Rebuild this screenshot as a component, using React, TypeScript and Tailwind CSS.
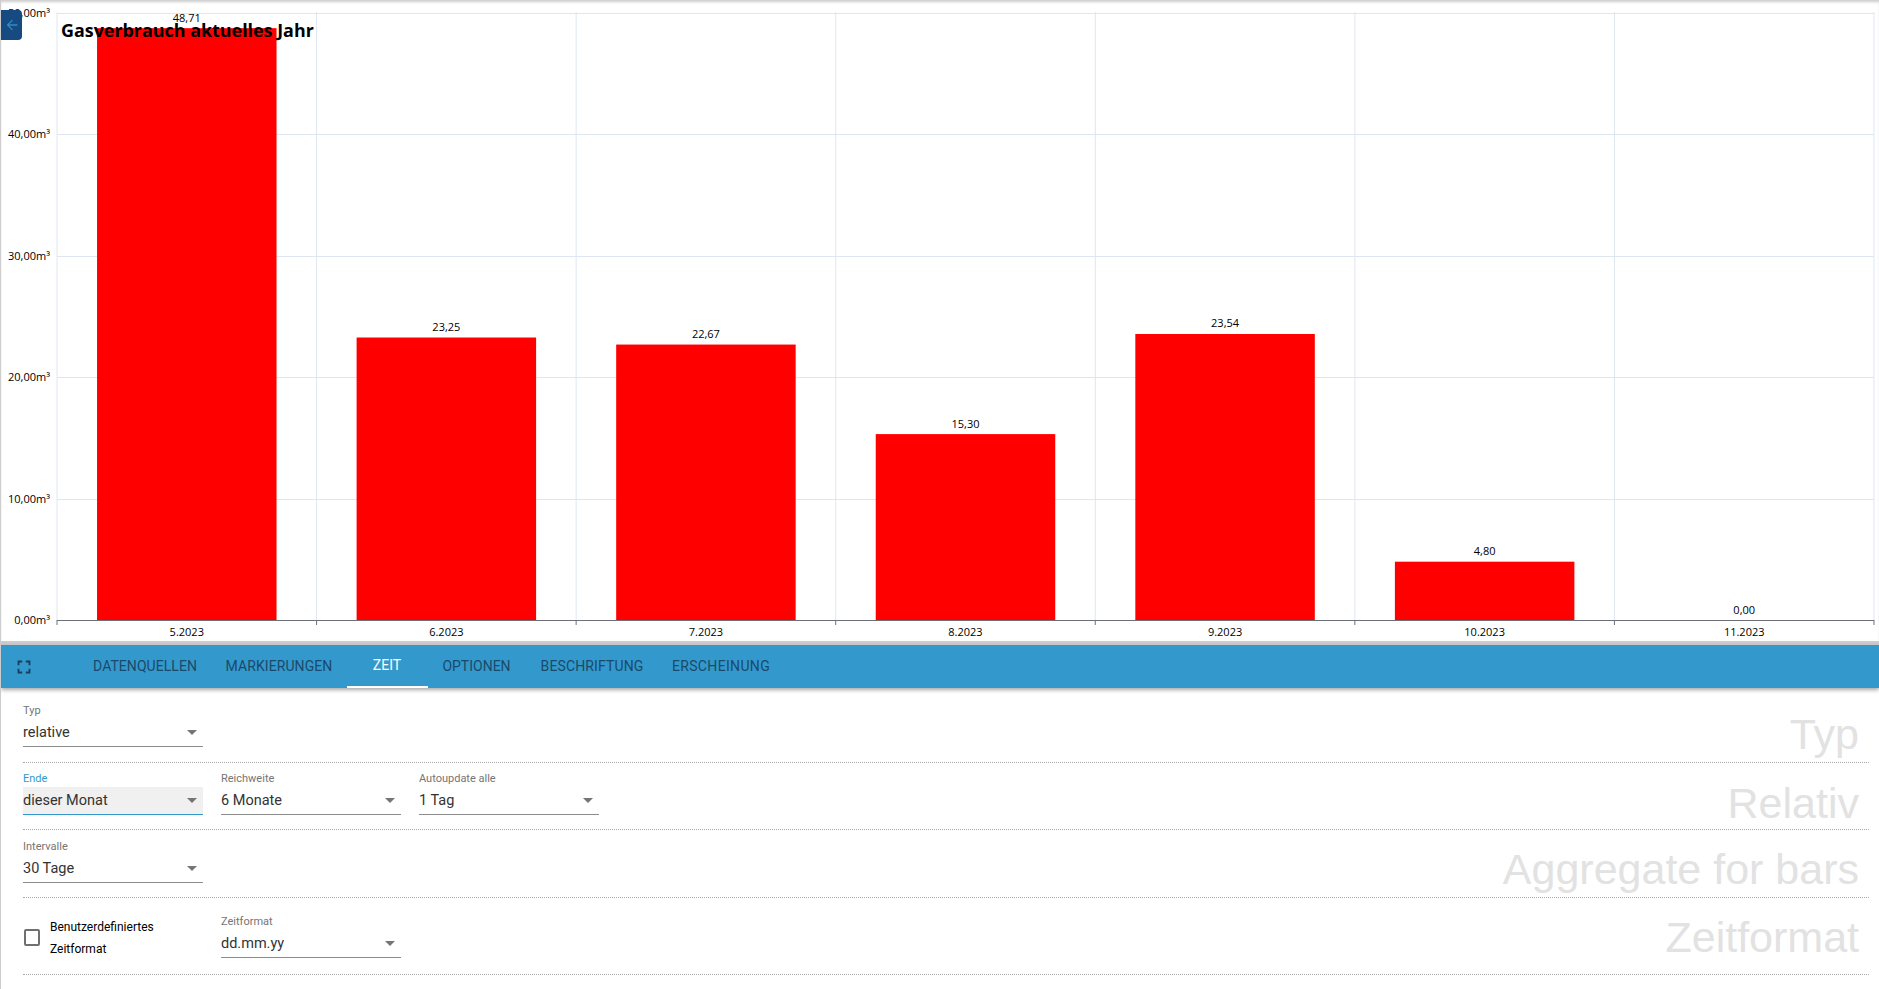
import type { ReactNode } from "react";

const PLOT_LEFT = 56;
const PLOT_RIGHT = 1873;
const CAT_WIDTH = 259.57;
const ZERO_Y = 620;
const UNIT_PX = 12.15;
const BAR_WIDTH = 179.5;

const months = [
  { label: "5.2023", value: 48.71 },
  { label: "6.2023", value: 23.25 },
  { label: "7.2023", value: 22.67 },
  { label: "8.2023", value: 15.3 },
  { label: "9.2023", value: 23.54 },
  { label: "10.2023", value: 4.8 },
  { label: "11.2023", value: 0 },
];

const yTicks = [0, 10, 20, 30, 40, 50];

// Fixed tab widths, the bar is a row of equal-height cells.
const tabs = [
  { label: "DATENQUELLEN", box: "w-[133px] pb-px tracking-[0.05px]" },
  { label: "MARKIERUNGEN", box: "w-[135px] pb-px tracking-[0.08px]" },
  { label: "ZEIT", box: "w-[81px] border-b-2 border-white text-white" },
  { label: "OPTIONEN", box: "w-[98px] pb-px" },
  { label: "BESCHRIFTUNG", box: "w-[133px] pb-px tracking-[0.12px]" },
  { label: "ERSCHEINUNG", box: "w-[125px] pb-px tracking-[0.35px]" },
];

function fmt(n: number) {
  return n.toFixed(2).replace(".", ",");
}

function BarChart() {
  const xs = Array.from({ length: 8 }, (_, i) => PLOT_LEFT + CAT_WIDTH * i);
  return (
    <svg width={1878} height={641} className="block font-['Open_Sans',sans-serif] text-[11px]">
      {yTicks.map((t) => {
        const y = Math.round(ZERO_Y - t * UNIT_PX) + 0.5;
        return (
          <g key={t}>
            {t > 0 && <line x1={PLOT_LEFT} x2={PLOT_RIGHT} y1={y} y2={y} stroke="#e0e6f1" />}
            <text x={49} y={y + 3} textAnchor="end" fill="#000">
              {fmt(t)}m³
            </text>
          </g>
        );
      })}
      {xs.map((x, i) => (
        <line key={i} x1={x} x2={x} y1={12} y2={ZERO_Y} stroke="#e0e6f1" />
      ))}
      {months.map((m, i) => {
        const cx = xs[i] + CAT_WIDTH / 2;
        const h = m.value * UNIT_PX;
        return (
          <g key={m.label}>
            <rect x={cx - BAR_WIDTH / 2} y={ZERO_Y - h} width={BAR_WIDTH} height={h} fill="#ff0000" />
            <text x={cx} y={ZERO_Y - h - 6.5} textAnchor="middle" fill="#000">
              {fmt(m.value)}
            </text>
            <text x={cx} y={636} textAnchor="middle" fill="#000">
              {m.label}
            </text>
          </g>
        );
      })}
      <line x1={PLOT_LEFT} x2={PLOT_RIGHT} y1={620.5} y2={620.5} stroke="#6e7079" />
      {xs.map((x, i) => (
        <line key={i} x1={x} x2={x} y1={620} y2={625} stroke="#6e7079" />
      ))}
    </svg>
  );
}

function Select({ label, value, focused }: { label: string; value: string; focused?: boolean }) {
  return (
    <div className="mb-px flex w-[180px] flex-col">
      <span className={`h-[15px] text-[11px] leading-[13px] ${focused ? "text-[#3399cc]" : "text-[#757575]"}`}>
        {label}
      </span>
      <div
        className={`flex h-[28px] items-center justify-between border-b pr-[6px] text-[14.5px] text-[#333] ${
          focused ? "border-[#3399cc] bg-[#f0f0f0]" : "border-[#8c8c8c]"
        }`}
      >
        <span>{value}</span>
        <span className="h-0 w-0 border-x-[5px] border-t-[5px] border-x-transparent border-t-[#757575]" />
      </div>
    </div>
  );
}

function Row({
  title,
  titleClass,
  className,
  children,
}: {
  title: string;
  titleClass: string;
  className: string;
  children: ReactNode;
}) {
  return (
    <div className={`relative flex gap-[18px] border-b border-dotted border-[#aaa] ${className}`}>
      {children}
      <span
        className={`absolute right-[10px] font-['Liberation_Sans',sans-serif] text-[43px] leading-[56px] text-[#e2e2e2] ${titleClass}`}
      >
        {title}
      </span>
    </div>
  );
}

export default function App() {
  return (
    <div className="relative flex h-screen w-full flex-col overflow-hidden border-l border-[#ccc] bg-white font-['Roboto',sans-serif]">
      <div className="relative h-[641px] shrink-0 shadow-[inset_0_3px_3px_-1px_rgba(0,0,0,0.2)]">
        <BarChart />
        <button className="absolute top-[10px] left-0 flex h-[30px] w-[21px] items-center justify-center rounded-r-[4px] bg-[#164a80]">
          <svg viewBox="0 0 24 24" className="h-[16px] w-[16px] fill-[#2f8cc4]">
            <path d="M20 11H7.83l5.59-5.59L12 4l-8 8 8 8 1.41-1.41L7.83 13H20v-2z" />
          </svg>
        </button>
        <h1 className="absolute top-[17px] left-[60px] font-['Open_Sans',sans-serif] text-[17.9px] leading-[26px] font-bold text-black">
          Gasverbrauch aktuelles Jahr
        </h1>
      </div>
      <div className="h-[4px] shrink-0 bg-[#cccccc]" />
      <div className="relative flex h-[43px] shrink-0 items-stretch bg-[#3399cc] shadow-[0_2px_4px_rgba(0,0,0,0.35)]">
        <svg viewBox="0 0 24 24" className="mt-[11px] ml-[12px] h-[22px] w-[22px] fill-[#16405c]">
          <path d="M7 14H5v5h5v-2H7v-3zm-2-4h2V7h3V5H5v5zm12 7h-3v2h5v-5h-2v3zM14 5v2h3v3h2V5h-5z" />
        </svg>
        <div className="ml-[43.5px] flex">
          {tabs.map((t) => (
            <div
              key={t.label}
              className={`flex h-[43px] items-center justify-center text-[14px] text-[#1a4a6b] ${t.box}`}
            >
              {t.label}
            </div>
          ))}
        </div>
      </div>
      <div className="mr-[10px] ml-[22px] flex flex-col">
        <Row title="Typ" titleClass="top-[18px]" className="pt-[16px] pb-[14px]">
          <Select label="Typ" value="relative" />
        </Row>
        <Row title="Relativ" titleClass="top-[12px]" className="pt-[9px] pb-[13px]">
          <Select label="Ende" value="dieser Monat" focused />
          <Select label="Reichweite" value="6 Monate" />
          <Select label="Autoupdate alle" value="1 Tag" />
        </Row>
        <Row title="Aggregate for bars" titleClass="top-[11px]" className="pt-[10px] pb-[13px]">
          <Select label="Intervalle" value="30 Tage" />
        </Row>
        <Row title="Zeitformat" titleClass="top-[11px]" className="pt-[17px] pb-[15px]">
          <div className="flex w-[180px] items-center gap-[10px]">
            <span className="ml-px h-[17px] w-[16px] shrink-0 rounded-[2px] border-2 border-[#707070]" />
            <span className="mt-px -mb-px w-[120px] text-[12px] leading-[22px] text-black">
              Benutzerdefiniertes Zeitformat
            </span>
          </div>
          <Select label="Zeitformat" value="dd.mm.yy" />
        </Row>
      </div>
    </div>
  );
}
